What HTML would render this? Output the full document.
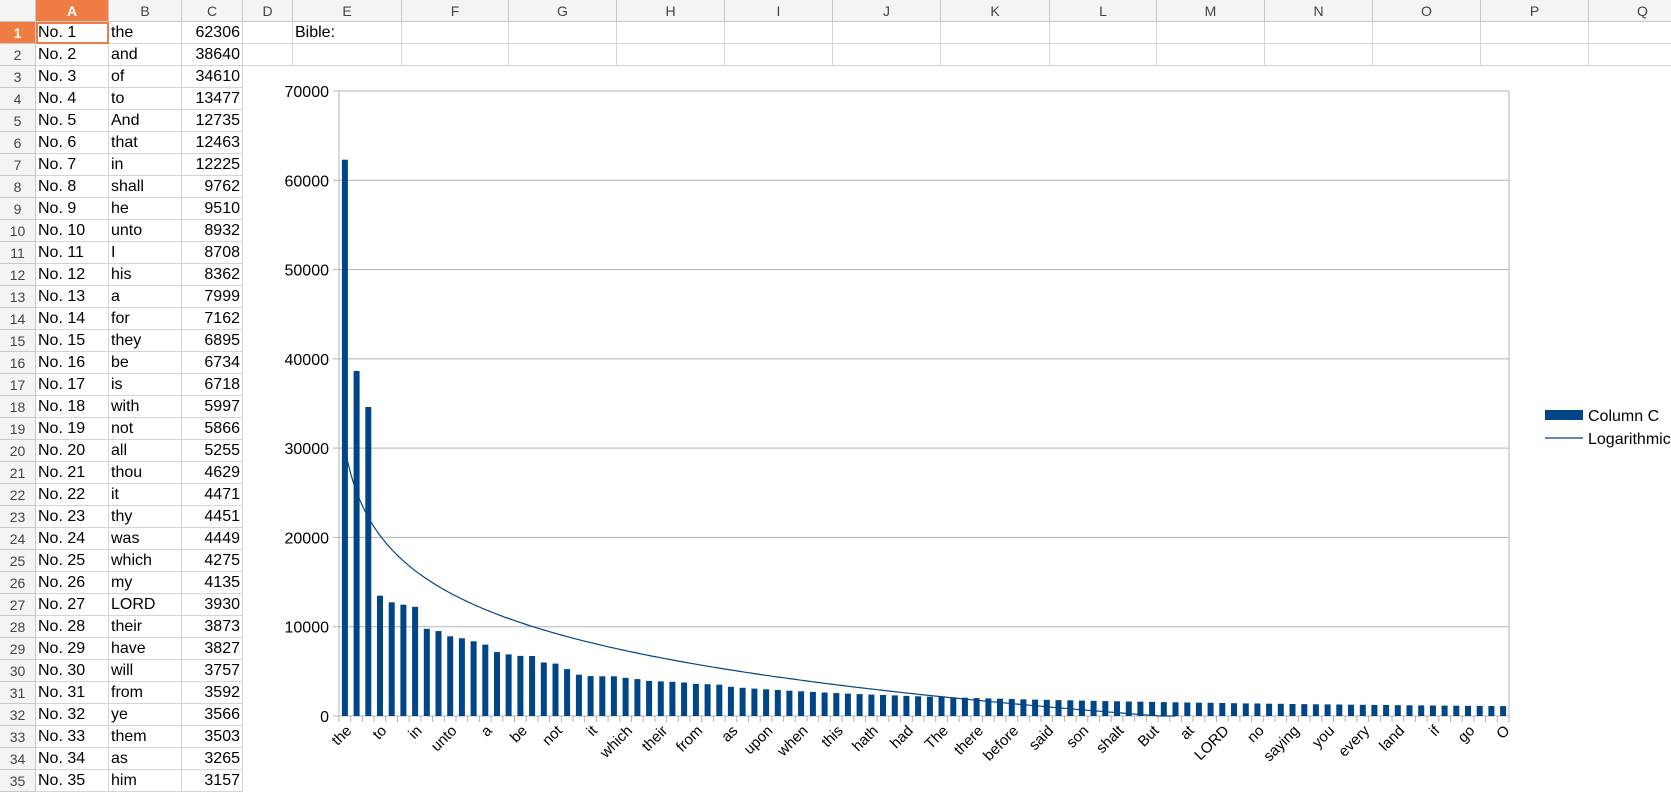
<!DOCTYPE html>
<html><head><meta charset="utf-8"><style>
body{margin:0;width:1671px;height:786px;overflow:hidden;background:#fff;font-family:"Liberation Sans",sans-serif;position:relative}
.h{position:absolute;top:0;height:22px;background:#f4f4f4;border-right:1px solid #c8c8c8;border-bottom:1px solid #c8c8c8;box-sizing:border-box;text-align:center;font-size:14px;color:#444;line-height:22px}
.rh{position:absolute;left:0;width:36px;height:22px;background:#f4f4f4;border-right:1px solid #c8c8c8;border-bottom:1px solid #c8c8c8;box-sizing:border-box;text-align:center;font-size:14px;color:#444;line-height:22px}
.c{position:absolute;height:22px;border-right:1px solid #d4d4d4;border-bottom:1px solid #d4d4d4;box-sizing:border-box;font-size:16px;line-height:22px;padding:0 2px;color:#000;white-space:nowrap}
.r{text-align:right}
</style></head><body>
<div id="g"></div>
<svg id="ch" style="position:absolute;left:0;top:0" width="1671" height="786"></svg>
<script>
var cols=[["",0,36],["A",36,109],["B",109,182],["C",182,243],["D",243,293],["E",293,402],["F",402,509],["G",509,617],["H",617,725],["I",725,833],["J",833,941],["K",941,1050],["L",1050,1157],["M",1157,1265],["N",1265,1373],["O",1373,1481],["P",1481,1589],["Q",1589,1697]];
var w=["the","and","of","to","And","that","in","shall","he","unto","I","his","a","for","they","be","is","with","not","all","thou","it","thy","was","which","my","LORD","their","have","will","from","ye","them","as","him"];
var v=[62306,38640,34610,13477,12735,12463,12225,9762,9510,8932,8708,8362,7999,7162,6895,6734,6718,5997,5866,5255,4629,4471,4451,4449,4275,4135,3930,3873,3827,3757,3592,3566,3503,3265,3157];
var h="";
for(var i=0;i<cols.length;i++){var c=cols[i];h+='<div class="h" style="left:'+c[1]+'px;width:'+(c[2]-c[1])+'px;'+(c[0]=="A"?'background:#ef7c42;color:#fff;font-weight:bold':'')+'">'+c[0]+'</div>';}
for(var r=0;r<35;r++){var y=22+r*22;
h+='<div class="rh" style="top:'+y+'px;'+(r==0?'background:#ef7c42;color:#fff;font-weight:bold':'')+'">'+(r+1)+'</div>';
h+='<div class="c" style="left:36px;top:'+y+'px;width:73px">No. '+(r+1)+'</div>';
h+='<div class="c" style="left:109px;top:'+y+'px;width:73px">'+w[r]+'</div>';
h+='<div class="c r" style="left:182px;top:'+y+'px;width:61px">'+v[r]+'</div>';
if(r<2){for(var k=4;k<cols.length;k++){h+='<div class="c" style="left:'+cols[k][1]+'px;top:'+y+'px;width:'+(cols[k][2]-cols[k][1])+'px">'+(r==0&&k==5?'Bible:':'')+'</div>';}}
}
h+='<div style="position:absolute;left:36px;top:22px;width:73px;height:22px;border:2px solid #ef7c42;box-sizing:border-box"></div>';
h+='<div style="position:absolute;left:243px;top:66px;width:1430px;height:720px;background:#fff"></div>';
document.getElementById("g").innerHTML=h;
var s="",X0=339,X1=1509,Y0=716,sc=625/70000,N=100,p=(X1-X0)/N;
for(var k=0;k<=7;k++){var yy=Y0-k*10000*sc;s+='<line x1="'+(X0-6)+'" x2="'+X1+'" y1="'+yy+'" y2="'+yy+'" stroke="#b3b3b3"/>';s+='<text x="'+(X0-10)+'" y="'+(yy+6)+'" font-size="16" text-anchor="end">'+(k*10000)+'</text>';}
s+='<line x1="'+X0+'" x2="'+X0+'" y1="'+(Y0-70000*sc)+'" y2="'+(Y0+6)+'" stroke="#b3b3b3"/><line x1="'+X1+'" x2="'+X1+'" y1="'+(Y0-70000*sc)+'" y2="'+Y0+'" stroke="#b3b3b3"/>';
var lab=["the","to","in","unto","a","be","not","it","which","their","from","as","upon","when","this","hath","had","The","there","before","said","son","shalt","But","at","LORD","no","saying","you","every","land","if","go","O"];
for(var n=1;n<=N;n++){var val=n<=35?v[n-1]:3157*35/n;var bh=val*sc;var bx=X0+(n-1)*p+(p-6)/2;
s+='<rect x="'+bx.toFixed(1)+'" y="'+(Y0-bh).toFixed(1)+'" width="6" height="'+bh.toFixed(1)+'" fill="#004586"/>';
s+='<line x1="'+(X0+n*p).toFixed(1)+'" x2="'+(X0+n*p).toFixed(1)+'" y1="'+Y0+'" y2="'+(Y0+6)+'" stroke="#b3b3b3"/>';
if((n-1)%3==0){var li=(n-1)/3;if(li<lab.length){var cx=X0+(n-0.5)*p+4,cy=Y0+12;s+='<text transform="translate('+cx.toFixed(1)+','+cy+') rotate(-45)" font-size="15" text-anchor="end" dy="5">'+lab[li]+'</text>';}}}
var d="";for(var x=1;x<=72;x+=0.25){var val=30000-7046*Math.log(x);if(val<0)val=0;var px=X0+(x-0.5)*p,py=Y0-val*sc;d+=(d?"L":"M")+px.toFixed(1)+","+py.toFixed(1);}
s+='<path d="'+d+'" fill="none" stroke="#004586" stroke-width="1.2"/>';
s+='<rect x="1545" y="410" width="38" height="10" fill="#004586"/><text x="1588" y="421" font-size="16">Column C</text>';
s+='<line x1="1545" x2="1583" y1="438" y2="438" stroke="#004586" stroke-width="1.2"/><text x="1588" y="444" font-size="16">Logarithmic</text>';
document.getElementById("ch").innerHTML=s;
</script>
</body></html>
